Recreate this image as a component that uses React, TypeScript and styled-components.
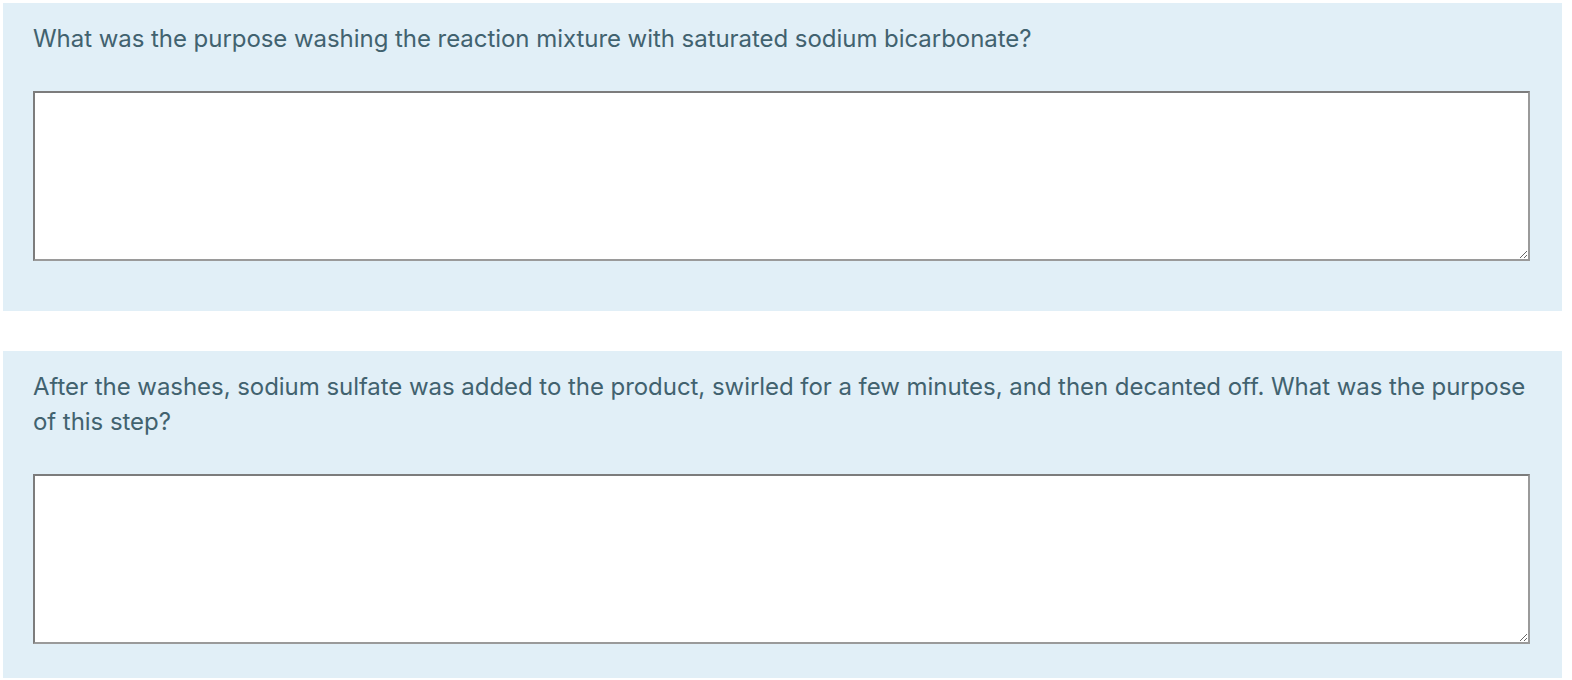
import styled, { createGlobalStyle } from 'styled-components';

const GlobalStyle = createGlobalStyle`
  body {
    margin: 0;
    background: #ffffff;
    font-family: Inter, "Noto Sans", sans-serif;
  }
`;

export default function App() {
  return (
    <>
      <GlobalStyle />
      <Page>
        <Question $bottom={50}>
          <Prompt>What was the purpose washing the reaction mixture with saturated sodium bicarbonate?</Prompt>
          <Answer />
        </Question>
        <Question $bottom={34}>
          <Prompt>
            After the washes, sodium sulfate was added to the product, swirled for a few minutes, and then decanted off. What was the purpose
            of this step?
          </Prompt>
          <Answer />
        </Question>
      </Page>
    </>
  );
}

const Page = styled.div`
  display: flex;
  flex-direction: column;
  gap: 40px;
  padding: 3px 10px 0 3px;
`;
const Question = styled.div<{ $bottom: number }>`
  display: flex;
  flex-direction: column;
  gap: 35px;
  padding: 18px 32px ${(p) => p.$bottom}px 30px;
  background: #e1eff7;
`;
const Prompt = styled.div`
  font-size: 24px;
  line-height: 35px;
  letter-spacing: -0.05px;
  color: #41626f;
`;
const Answer = styled.textarea`
  box-sizing: border-box;
  width: 100%;
  height: 170px;
  margin: 0;
  border: 2px solid #7c7c7c;
  border-right-color: #9a9a9a;
  border-bottom-color: #9a9a9a;
  background: #ffffff;
  resize: vertical;
  font-family: inherit;
`;
